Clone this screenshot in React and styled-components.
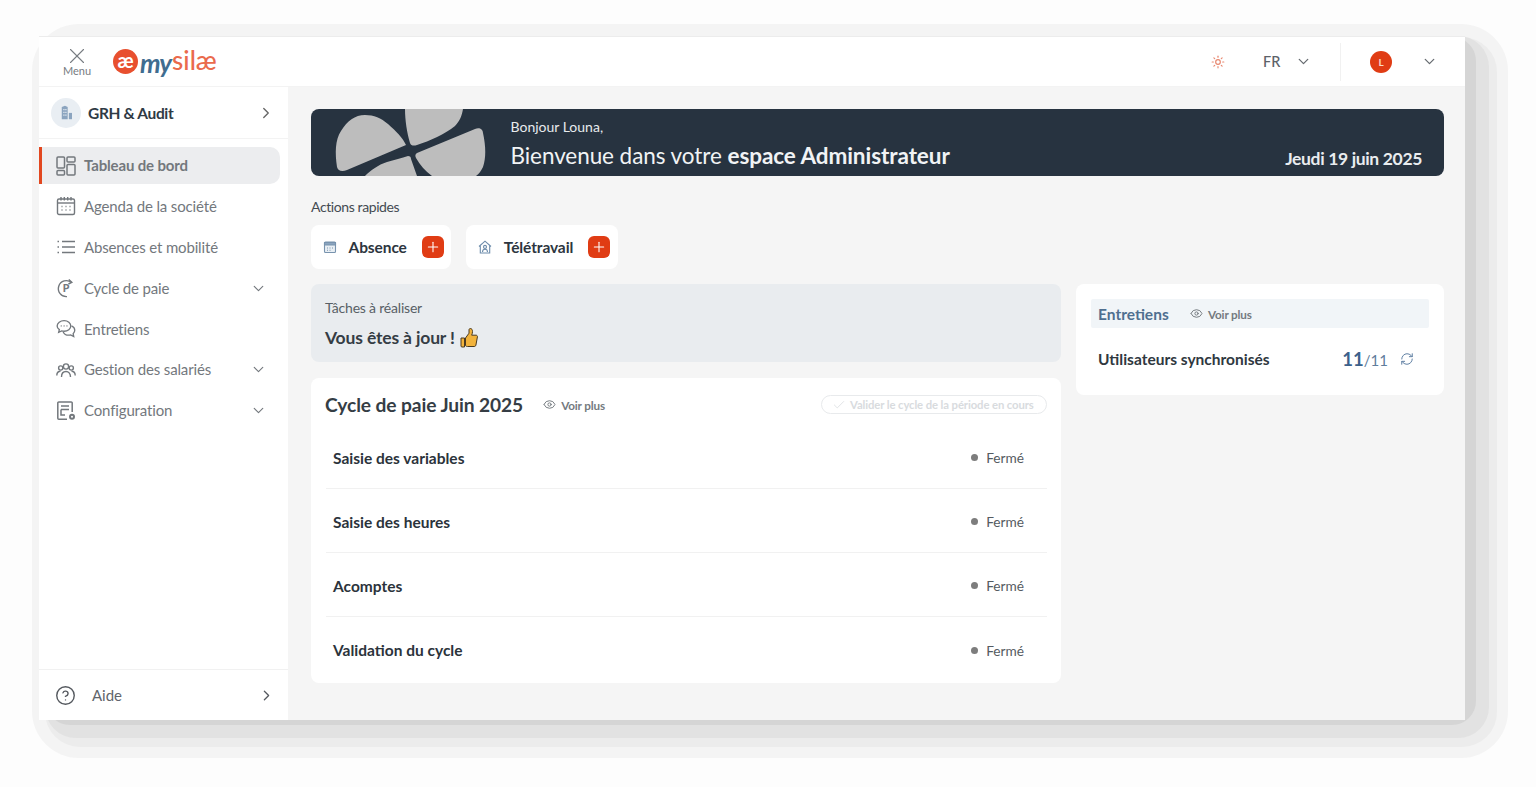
import React from 'react';
import styled, { createGlobalStyle } from 'styled-components';
import {
  Check,
  ChevronDown,
  ChevronRight,
  CircleHelp,
  Eye,
  Plus,
  RefreshCw,
  Sun,
  X,
} from 'lucide-react';

const GlobalStyle = createGlobalStyle`
  html, body {
    margin: 0;
    height: 100%;
    background: #fdfdfd;
    font-family: Lato, "Open Sans", sans-serif;
    overflow: hidden;
  }
  * { box-sizing: border-box; }
`;

const DashboardIcon = () => (
  <svg width="20" height="20" viewBox="0 0 20 20" fill="none" stroke="currentColor" strokeWidth="1.5">
    <rect x="1" y="1" width="7.5" height="11" rx="1" />
    <rect x="1" y="14.5" width="7.5" height="4.500" rx="1" />
    <rect x="11" y="1" width="8" height="5" rx="1" />
    <rect x="11" y="8.500" width="8" height="10.500" rx="1" />
  </svg>
);

const AgendaIcon = () => (
  <svg width="20" height="20" viewBox="0 0 20 20" fill="none" stroke="currentColor" strokeWidth="1.4">
    <rect x="1.500" y="3" width="17" height="15.500" rx="1.500" />
    <path d="M1.500 7h17" />
    <path d="M5 1v3.500M8.300 1v3.500M11.700 1v3.500M15 1v3.500" />
    <path d="M5.500 10.500h1M9.500 10.500h1M13.500 10.500h1M5.500 14h1M9.500 14h1M13.500 14h1" />
  </svg>
);

const ListIcon = () => (
  <svg width="20" height="20" viewBox="0 0 20 20" fill="none" stroke="currentColor" strokeWidth="1.5">
    <path d="M6 4.500h13M6 10h13M6 15.500h13" />
    <path d="M1.500 4.500h1.500M1.500 10h1.500M1.500 15.500h1.500" />
  </svg>
);

const CycleIcon = () => (
  <svg width="20" height="20" viewBox="0 0 20 20" fill="none" stroke="currentColor" strokeWidth="1.4">
    <path d="M15.500 4.500A8 8 0 1 0 11 18.600" />
    <path d="M12.800 1.600l3 2.800-3.400 1.600" />
    <text x="6.800" y="14.200" fontSize="10.500" fontWeight="900" fill="currentColor" stroke="none" fontFamily="Lato">P</text>
  </svg>
);

const BubblesIcon = () => (
  <svg width="21" height="20" viewBox="0 0 21 20" fill="none" stroke="currentColor" strokeWidth="1.4">
    <path d="M8.500 1.200c4 0 7 2.600 7 5.600 0 3.100-3 5.600-7 5.600-.9 0-1.800-.1-2.600-.4L2.800 13.400l.7-2.800C2 9.600 1.200 8.300 1.200 6.800c0-3 3.300-5.600 7.300-5.600z" />
    <path d="M16.300 6.800c2 .9 3.400 2.500 3.400 4.600 0 1.400-.7 2.600-1.700 3.500l.6 3-3.300-1.600c-3.200.6-6.500-.6-7.800-3.200" />
    <circle cx="5.500" cy="6.800" r=".7" fill="currentColor" stroke="none" />
    <circle cx="8.500" cy="6.800" r=".7" fill="currentColor" stroke="none" />
    <circle cx="11.500" cy="6.800" r=".7" fill="currentColor" stroke="none" />
  </svg>
);

const PeopleIcon = () => (
  <svg width="20" height="20" viewBox="0 0 20 20" fill="none" stroke="currentColor" strokeWidth="1.4">
    <circle cx="10" cy="6.500" r="2.600" />
    <circle cx="4.700" cy="8" r="2.100" />
    <circle cx="15.300" cy="8" r="2.100" />
    <path d="M5.500 17c0-3.500 2-5.500 4.500-5.500s4.500 2 4.500 5.500" />
    <path d="M.8 15.500c0-2.500 1.500-4.300 3.700-4.300" />
    <path d="M19.200 15.500c0-2.500-1.500-4.300-3.700-4.300" />
  </svg>
);

const ConfigIcon = () => (
  <svg width="20" height="20" viewBox="0 0 20 20" fill="none" stroke="currentColor" strokeWidth="1.5">
    <path d="M11 18.300H2.800a1 1 0 0 1-1-1V2a1 1 0 0 1 1-1h12.400a1 1 0 0 1 1 1v9" />
    <path d="M5 5h8M5 8.500h8M5 8.500v5.500h4" />
    <circle cx="16" cy="15.800" r="3" fill="currentColor" stroke="none" />
    <circle cx="16" cy="15.800" r="1" fill="#fff" stroke="none" />
  </svg>
);

const BuildingIcon = () => (
  <svg width="13" height="15" viewBox="0 0 16 19" fill="#8ba4bf">
    <path d="M2 2.500 6 .8l3.500 1.700V18H2z" />
    <path d="M11 10h4v8h-4z" />
    <path d="M4 5h1.500v1.500H4zM6.500 5H8v1.500H6.500zM4 8.500h1.500V10H4zM6.500 8.500H8V10H6.500zM4 12h1.500v1.500H4zM6.500 12H8v1.500H6.500z" fill="#e9eef3" />
  </svg>
);

const SmallCalendarIcon = () => (
  <svg width="14" height="14" viewBox="0 0 14 14" fill="#e9eff4" stroke="#7893ae" strokeWidth="1.100">
    <rect x="1.500" y="2" width="11" height="10.500" rx="1" />
    <path d="M1.500 2.500h11V5h-11z" fill="#8ba4bf" />
    <path d="M4 8h1M6.500 8h1M9 8h1M4 10.300h1M6.500 10.300h1" />
  </svg>
);

const HomeIcon = () => (
  <svg width="14" height="14" viewBox="0 0 14 14" fill="none" stroke="#6d8cab" strokeWidth="1.100">
    <path d="M1 6.500 7 1.200l6 5.300M2.300 5.500V13h9.400V5.500" />
    <circle cx="7" cy="6.900" r="1.500" />
    <path d="M4.500 12c0-1.800 1.100-2.800 2.500-2.800s2.500 1 2.500 2.800" />
  </svg>
);

const ThumbIcon = () => (
  <svg width="18" height="20" viewBox="0 0 18 20">
    <path
      d="M1 10h3.500v9H2a1 1 0 0 1-1-1zM5.500 10 9 5.200V2c0-1 .6-1.500 1.300-1.500 1.500 0 2.200 1.300 2.200 3 0 1.300-.4 2.700-.8 3.700H16c1 0 1.600.8 1.400 1.800l-1.500 8.200c-.2.800-.8 1.300-1.600 1.300H7.500c-.9 0-1.500-.3-2-.8z"
      fill="#f2b33c"
      stroke="#4a3a20"
      strokeWidth="1"
      strokeLinejoin="round"
    />
  </svg>
);

const BannerMark = () => (
  <svg width="190" height="67" viewBox="0 0 190 67" fill="#bdbdbd">
    <path d="M26 58C24 44 24 31 30 22 36 12 44 6 54 6c9 0 16 3 23 9 8 7 15 14 18 21L36 61c-5 2-9 1-10-3z" />
    <path d="M94 0h58c-1 6-3 12-8 17-10 8-25 15-38 19-3 1-6 1-7-2-3-10-5-23-5-34z" />
    <path d="M106 44l58-24c4-2 8 0 8 4 3 14 3 25 0 34-2 4-4 7-7 9h-44c-7-5-12-11-16-18-1-2-1-4 1-5z" />
    <path d="M54 67c6-6 13-11 22-14 7-2 15-4 21-6 2 0 3 1 3 3l6 17z" />
  </svg>
);

const navItems = [
  { label: 'Tableau de bord', icon: <DashboardIcon />, active: true },
  { label: 'Agenda de la société', icon: <AgendaIcon /> },
  { label: 'Absences et mobilité', icon: <ListIcon /> },
  { label: 'Cycle de paie', icon: <CycleIcon />, expandable: true },
  { label: 'Entretiens', icon: <BubblesIcon /> },
  { label: 'Gestion des salariés', icon: <PeopleIcon />, expandable: true },
  { label: 'Configuration', icon: <ConfigIcon />, expandable: true },
];

const cycleSteps = ['Saisie des variables', 'Saisie des heures', 'Acomptes', 'Validation du cycle'];

const VoirPlus = () => (
  <VoirLink>
    <Eye size={13} strokeWidth={1.8} />
    Voir plus
  </VoirLink>
);

export default function App() {
  return (
    <>
      <GlobalStyle />
      <Page>
        <Window>
          <Header>
            <MenuButton>
              <X size={26} strokeWidth={1} />
              <span>Menu</span>
            </MenuButton>
            <Logo>
              <LogoBadge>æ</LogoBadge>
              <LogoMy>my</LogoMy>
              <LogoName>silæ</LogoName>
            </Logo>
            <HeaderRight>
              <Sun size={14} color="#e8876f" strokeWidth={2} />
              <Lang>FR</Lang>
              <HeaderChevron>
                <ChevronDown size={17} strokeWidth={1.8} />
              </HeaderChevron>
              <HeaderDivider />
              <Avatar>L</Avatar>
              <HeaderChevron>
                <ChevronDown size={17} strokeWidth={1.8} />
              </HeaderChevron>
            </HeaderRight>
          </Header>
          <Body>
            <Sidebar>
              <CompanyRow>
                <CompanyBadge>
                  <BuildingIcon />
                </CompanyBadge>
                <CompanyName>GRH &amp; Audit</CompanyName>
                <ChevronRight size={18} strokeWidth={1.8} color="#666" />
              </CompanyRow>
              <Nav>
                {navItems.map(({ label, icon, active, expandable }) => (
                  <NavItem key={label} $active={active}>
                    <NavIcon>{icon}</NavIcon>
                    <NavLabel $active={active}>{label}</NavLabel>
                    {expandable && <ChevronDown size={17} strokeWidth={1.6} />}
                  </NavItem>
                ))}
              </Nav>
              <HelpRow>
                <CircleHelp size={21} strokeWidth={1.6} />
                <HelpLabel>Aide</HelpLabel>
                <ChevronRight size={17} strokeWidth={1.8} />
              </HelpRow>
            </Sidebar>
            <Main>
              <Banner>
                <BannerMark />
                <BannerText>
                  <Hello>Bonjour Louna,</Hello>
                  <Welcome>
                    Bienvenue dans votre <strong>espace Administrateur</strong>
                  </Welcome>
                </BannerText>
                <BannerDate>Jeudi 19 juin 2025</BannerDate>
              </Banner>

              <SectionLabel>Actions rapides</SectionLabel>
              <QuickActions>
                <QuickAction>
                  <SmallCalendarIcon />
                  <QuickLabel>Absence</QuickLabel>
                  <AddButton>
                    <Plus size={16} strokeWidth={1.6} />
                  </AddButton>
                </QuickAction>
                <QuickAction>
                  <HomeIcon />
                  <QuickLabel>Télétravail</QuickLabel>
                  <AddButton>
                    <Plus size={16} strokeWidth={1.6} />
                  </AddButton>
                </QuickAction>
              </QuickActions>

              <Columns>
                <LeftColumn>
                  <TasksCard>
                    <TasksLabel>Tâches à réaliser</TasksLabel>
                    <TasksStatus>
                      Vous êtes à jour ! <ThumbIcon />
                    </TasksStatus>
                  </TasksCard>
                  <CycleCard>
                    <CycleHeader>
                      <CycleTitle>Cycle de paie Juin 2025</CycleTitle>
                      <VoirPlus />
                      <ValidateButton>
                        <Check size={14} strokeWidth={1.3} />
                        Valider le cycle de la période en cours
                      </ValidateButton>
                    </CycleHeader>
                    {cycleSteps.map((step) => (
                      <StepRow key={step}>
                        <StepName>{step}</StepName>
                        <StepStatus>Fermé</StepStatus>
                      </StepRow>
                    ))}
                  </CycleCard>
                </LeftColumn>
                <SideCard>
                  <SideHeader>
                    <SideTitle>Entretiens</SideTitle>
                    <VoirPlus />
                  </SideHeader>
                  <SyncRow>
                    <SyncLabel>Utilisateurs synchronisés</SyncLabel>
                    <SyncCount>
                      <b>11</b>/11
                    </SyncCount>
                    <RefreshCw size={14} color="#5f80a3" strokeWidth={1.7} />
                  </SyncRow>
                </SideCard>
              </Columns>
            </Main>
          </Body>
        </Window>
      </Page>
    </>
  );
}

const Page = styled.div`
  height: 787px;
  padding: 36px 0 0 39px;
  isolation: isolate;
`;

const Window = styled.div`
  position: relative;
  width: 1426px;
  height: 684px;
  display: flex;
  flex-direction: column;
  background: #f5f5f5;

  &::before {
    content: '';
    position: absolute;
    inset: 0;
    z-index: -1;
    border-radius: 22px;
    box-shadow:
      9px 3px 0 2px #d5d5d5,
      15px 9px 0 9px #e2e2e2,
      19px 14px 0 13px #ececec,
      18px 13px 0 25px #f4f4f4;
  }
`;

const Header = styled.header`
  height: 51px;
  flex: none;
  display: flex;
  align-items: center;
  background: #fff;
  border-top: 1px solid #ececec;
  border-bottom: 1px solid #f3f3f3;
  padding: 0 27px 0 23px;
`;

const MenuButton = styled.div`
  width: 30px;
  display: flex;
  flex-direction: column;
  align-items: center;
  color: #777c82;
  margin-bottom: 4px;

  span {
    margin-top: -4px;
    font-size: 11px;
    line-height: 11px;
  }
`;

const Logo = styled.div`
  display: flex;
  align-items: center;
  margin-left: 21px;
`;

const LogoBadge = styled.div`
  width: 25px;
  height: 25px;
  border-radius: 50%;
  background: #e8502f;
  color: #fff;
  font-size: 20px;
  font-weight: 700;
  line-height: 22px;
  text-align: center;
`;

const LogoMy = styled.span`
  margin-left: 2px;
  width: 32px;
  font-size: 26px;
  font-style: italic;
  font-weight: 700;
  line-height: 30px;
  color: #3f6d90;
  letter-spacing: -1px;
  padding-top: 2px;
`;

const LogoName = styled.span`
  font-size: 26px;
  font-weight: 500;
  line-height: 30px;
  color: #ea6a4c;
  margin-top: -3px;
`;

const HeaderRight = styled.div`
  margin-left: auto;
  display: flex;
  align-items: center;
  color: #666b70;
`;

const Lang = styled.span`
  font-size: 14.5px;
  font-weight: 500;
  color: #5c6269;
  margin-left: 38px;
  width: 18px;
`;

const HeaderChevron = styled.span`
  display: flex;
  margin-left: 14px;

  &:last-child {
    margin-left: 29px;
  }
`;

const HeaderDivider = styled.span`
  width: 1px;
  height: 38px;
  background: #f1f1f1;
  margin: 0 29px 0 28px;
`;

const Avatar = styled.span`
  width: 22px;
  height: 22px;
  border-radius: 50%;
  background: #e03c14;
  color: #fbd9c8;
  font-size: 10px;
  font-weight: 700;
  display: flex;
  align-items: center;
  justify-content: center;
`;

const Body = styled.div`
  flex: 1;
  display: flex;
  min-height: 0;
`;

const Sidebar = styled.aside`
  width: 249px;
  flex: none;
  display: flex;
  flex-direction: column;
  background: #fff;
`;

const CompanyRow = styled.div`
  height: 52px;
  flex: none;
  display: flex;
  align-items: center;
  padding: 0 13px 0 12px;
  border-bottom: 1px solid #f3f3f3;
`;

const CompanyBadge = styled.span`
  width: 30px;
  height: 30px;
  border-radius: 50%;
  background: #e9eef3;
  display: flex;
  align-items: center;
  justify-content: center;
`;

const CompanyName = styled.span`
  flex: 1;
  margin-left: 7px;
  font-size: 15.5px;
  font-weight: 700;
  letter-spacing: -0.35px;
  color: #2f3a45;
`;

const Nav = styled.nav`
  flex: 1;
  display: flex;
  flex-direction: column;
  gap: 3.9px;
  padding: 8px 8px 0 0;
`;

const NavItem = styled.div`
  height: 37px;
  flex: none;
  display: flex;
  align-items: center;
  padding: 0 13px 0 14px;
  color: #73787d;
  border-left: 3px solid ${({ $active }) => ($active ? '#e2471f' : 'transparent')};
  border-radius: 0 10px 10px 0;
  background: ${({ $active }) => ($active ? '#ecedef' : 'transparent')};
`;

const NavIcon = styled.span`
  width: 20px;
  height: 20px;
  display: flex;
  align-items: center;
  justify-content: center;
  margin-right: 8px;
`;

const NavLabel = styled.span`
  flex: 1;
  padding-bottom: 1px;
  font-size: 15px;
  letter-spacing: -0.15px;
  font-weight: ${({ $active }) => ($active ? 700 : 400)};
`;

const HelpRow = styled.div`
  height: 51px;
  flex: none;
  display: flex;
  align-items: center;
  padding: 0 13px 0 16px;
  color: #55595f;
  border-top: 1px solid #f1f1f1;
`;

const HelpLabel = styled.span`
  flex: 1;
  margin-left: 16px;
  font-size: 15px;
  color: #5f656b;
`;

const Main = styled.main`
  flex: 1;
  padding: 22px 21px 0 23px;
  min-width: 0;
`;

const Banner = styled.section`
  height: 67px;
  display: flex;
  background: #273340;
  border-radius: 8px;
  overflow: hidden;
  color: #fff;
  padding-right: 22px;
`;

const BannerText = styled.div`
  margin-left: 9.5px;
  padding-top: 9px;
`;

const Hello = styled.div`
  font-size: 14px;
  line-height: 18px;
  color: #e8ebee;
`;

const Welcome = styled.div`
  margin-top: 6px;
  font-size: 22.5px;
  line-height: 28px;
  letter-spacing: -0.07px;
  color: #f1f3f5;

  strong {
    font-weight: 700;
  }
`;

const BannerDate = styled.div`
  margin-left: auto;
  align-self: flex-end;
  padding-bottom: 5px;
  font-size: 17.5px;
  line-height: 24px;
  font-weight: 700;
  letter-spacing: -0.35px;
  color: #e9ecef;
`;

const SectionLabel = styled.div`
  margin-top: 22px;
  font-size: 14px;
  line-height: 17px;
  letter-spacing: -0.4px;
  color: #444b52;
`;

const QuickActions = styled.div`
  margin-top: 10px;
  display: flex;
  gap: 15px;
`;

const QuickAction = styled.div`
  height: 44px;
  display: flex;
  align-items: center;
  padding: 0 7.5px 0 11.5px;
  background: #fff;
  border-radius: 8px;
`;

const QuickLabel = styled.span`
  margin: 0 15px 0 12px;
  padding-bottom: 1px;
  font-size: 15.5px;
  font-weight: 700;
  letter-spacing: -0.1px;
  color: #2d3640;
`;

const AddButton = styled.span`
  width: 22px;
  height: 22px;
  border-radius: 6px;
  background: #e03c14;
  color: #fff;
  display: flex;
  align-items: center;
  justify-content: center;
`;

const Columns = styled.div`
  margin-top: 15px;
  display: flex;
  align-items: flex-start;
  gap: 15px;
`;

const LeftColumn = styled.div`
  width: 750px;
  flex: none;
  display: flex;
  flex-direction: column;
  gap: 16px;
`;

const TasksCard = styled.section`
  height: 78px;
  padding: 15px 14px 0;
  background: #e9ecef;
  border-radius: 8px;
`;

const TasksLabel = styled.div`
  font-size: 14px;
  line-height: 17px;
  letter-spacing: -0.2px;
  color: #585f66;
`;

const TasksStatus = styled.div`
  margin-top: 10px;
  display: flex;
  align-items: center;
  gap: 5px;
  font-size: 17.5px;
  line-height: 24px;
  font-weight: 700;
  letter-spacing: -0.15px;
  color: #353d45;
`;

const CycleCard = styled.section`
  padding: 14px 14px 2px 15px;
  background: #fff;
  border-radius: 8px;
`;

const CycleHeader = styled.div`
  height: 25px;
  margin-bottom: 8px;
  display: flex;
  align-items: center;
`;

const CycleTitle = styled.h2`
  margin: 0 20px 0 -1px;
  font-size: 19.2px;
  font-weight: 700;
  letter-spacing: -0.1px;
  color: #353d45;
`;

const VoirLink = styled.span`
  display: inline-flex;
  align-items: center;
  gap: 5px;
  font-size: 11.7px;
  font-weight: 700;
  letter-spacing: -0.15px;
  color: #747a80;
`;

const ValidateButton = styled.span`
  margin-left: auto;
  height: 19px;
  width: 226px;
  display: flex;
  align-items: center;
  gap: 4px;
  padding-left: 10px;
  border: 1px solid #e8eaec;
  border-radius: 10px;
  font-size: 11.3px;
  font-weight: 700;
  letter-spacing: -0.1px;
  white-space: nowrap;
  color: #d8dbde;
`;

const StepRow = styled.div`
  height: 64px;
  display: flex;
  align-items: center;
  justify-content: space-between;
  padding: 2px 23px 0 7px;
  border-bottom: 1px solid #f1f1f1;

  &:last-child {
    border-bottom: none;
  }
`;

const StepName = styled.span`
  font-size: 15.5px;
  font-weight: 700;
  color: #2b333b;
`;

const StepStatus = styled.span`
  display: flex;
  align-items: center;
  gap: 8px;
  font-size: 13.7px;
  color: #555b61;

  &::before {
    content: '';
    width: 7px;
    height: 7px;
    border-radius: 50%;
    background: #7d7d7d;
  }
`;

const SideCard = styled.section`
  flex: 1;
  height: 111px;
  padding: 15px;
  background: #fff;
  border-radius: 8px;
`;

const SideHeader = styled.div`
  height: 29px;
  display: flex;
  align-items: center;
  padding-left: 7px;
  background: #f1f5f8;
  border-radius: 2px;
`;

const SideTitle = styled.span`
  width: 92px;
  font-size: 15.5px;
  font-weight: 700;
  color: #4f6f90;
`;

const SyncRow = styled.div`
  margin-top: 17px;
  height: 28px;
  display: flex;
  align-items: center;
  padding: 0 15px 0 7px;
`;

const SyncLabel = styled.span`
  flex: 1;
  font-size: 15.5px;
  font-weight: 700;
  color: #2f3840;
`;

const SyncCount = styled.span`
  margin-right: 12px;
  font-size: 15px;
  color: #5f7d9c;

  b {
    font-size: 18.5px;
    font-weight: 700;
    color: #3c618b;
  }
`;
